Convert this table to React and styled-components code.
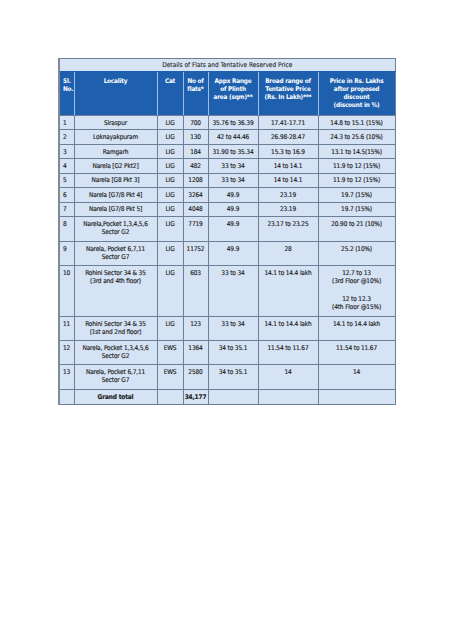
import React from "react";
import styled, { createGlobalStyle } from "styled-components";

const FONT = `"Liberation Sans Narrow", "DejaVu Sans Condensed", "DejaVu Sans", "Liberation Sans", sans-serif`;

const Global = createGlobalStyle`
  html, body { margin: 0; padding: 0; background: #ffffff; }
  body { font-family: ${FONT}; }
`;

const Page = styled.div`
  width: 474px;
  height: 632px;
  padding: 58px 0 0 58px;
  box-sizing: border-box;
  background: #fff;
`;

const Table = styled.table`
  border-collapse: collapse;
  table-layout: fixed;
  width: 336px;
  font-family: ${FONT};
  font-stretch: condensed;
  font-size: 6.5px;
  line-height: 8px;
  letter-spacing: -0.15px;
  color: #1f1f1f;
  background: #d5e3f5;
  border: 1px solid #6d7f96;
  border-left: 2px solid #7d8a9a;
`;

const TitleCell = styled.td`
  height: 12px;
  padding: 0;
  text-align: center;
  vertical-align: middle;
  background: #d7e4f4;
  color: #2a2a2a;
  font-size: 6.5px;
  letter-spacing: 0;
  -webkit-text-stroke: 0.1px #2a2a2a;
  border-bottom: 1px solid #1e5fae;
`;

const HeadRow = styled.tr`
  height: 44px;
  background: #1e5fae;
`;

const HeadCell = styled.th`
  padding: 5px 1px 0;
  vertical-align: top;
  text-align: ${(p) => p.$align || "center"};
  color: #ffffff;
  font-weight: 700;
  font-size: 6.4px;
  line-height: 8px;
  letter-spacing: -0.2px;
  white-space: nowrap;
  border-left: 1px solid #9fbde3;
  border-bottom: 1px solid #6d7f96;
  &:first-child { border-left: none; padding-left: 3px; }
`;

const Row = styled.tr`
  height: ${(p) => p.$h}px;
`;

const Cell = styled.td`
  padding: ${(p) => (p.$mid ? "0 1px" : "3px 1px 0")};
  vertical-align: ${(p) => (p.$mid ? "middle" : "top")};
  text-align: ${(p) => p.$align || "center"};
  font-weight: ${(p) => (p.$bold ? 700 : 400)};
  -webkit-text-stroke: 0.15px #1f1f1f;
  border: 1px solid #6d7f96;
  white-space: nowrap;
  &:first-child { padding-left: 3px; }
`;

const Block = styled.div`
  & + & { margin-top: 10px; }
`;

const rows = [
  { h: 14.43, n: "1", loc: ["Siraspur"], cat: "LIG", flats: "700", area: "35.76 to 36.39", broad: "17.41-17.71", price: [["14.8 to 15.1 (15%)"]] },
  { h: 14.43, n: "2", loc: ["Loknayakpuram"], cat: "LIG", flats: "130", area: "42 to 44.46", broad: "26.98-28.47", price: [["24.3 to 25.6 (10%)"]] },
  { h: 14.43, n: "3", loc: ["Ramgarh"], cat: "LIG", flats: "184", area: "31.90 to 35.34", broad: "15.3 to 16.9", price: [["13.1 to 14.5(15%)"]] },
  { h: 14.43, n: "4", loc: ["Narela [G2 Pkt2]"], cat: "LIG", flats: "482", area: "33 to 34", broad: "14 to 14.1", price: [["11.9 to 12 (15%)"]] },
  { h: 14.43, n: "5", loc: ["Narela [G8 Pkt 3]"], cat: "LIG", flats: "1208", area: "33 to 34", broad: "14 to 14.1", price: [["11.9 to 12 (15%)"]] },
  { h: 14.43, n: "6", loc: ["Narela [G7/8 Pkt 4]"], cat: "LIG", flats: "3264", area: "49.9", broad: "23.19", price: [["19.7 (15%)"]] },
  { h: 14.43, n: "7", loc: ["Narela [G7/8 Pkt 5]"], cat: "LIG", flats: "4048", area: "49.9", broad: "23.19", price: [["19.7 (15%)"]] },
  { h: 25, n: "8", loc: ["Narela,Pocket 1,3,4,5,6", "Sector G2"], cat: "LIG", flats: "7719", area: "49.9", broad: "23.17 to 23.25", price: [["20.90 to 21 (10%)"]] },
  { h: 24, n: "9", loc: ["Narela, Pocket 6,7,11", "Sector G7"], cat: "LIG", flats: "11752", area: "49.9", broad: "28", price: [["25.2 (10%)"]] },
  { h: 51, n: "10", loc: ["Rohini Sector 34 & 35", "(3rd and 4th floor)"], cat: "LIG", flats: "603", area: "33 to 34", broad: "14.1 to 14.4 lakh", price: [["12.7 to 13", "(3rd Floor @10%)"], ["12 to 12.3", "(4th Floor @15%)"]] },
  { h: 24, n: "11", loc: ["Rohini Sector 34 & 35", "(1st and 2nd floor)"], cat: "LIG", flats: "123", area: "33 to 34", broad: "14.1 to 14.4 lakh", price: [["14.1 to 14.4 lakh"]] },
  { h: 24, n: "12", loc: ["Narela, Pocket 1,3,4,5,6", "Sector G2"], cat: "EWS", flats: "1364", area: "34 to 35.1", broad: "11.54 to 11.67", price: [["11.54 to 11.67"]] },
  { h: 25, n: "13", loc: ["Narela, Pocket 6,7,11", "Sector G7"], cat: "EWS", flats: "2580", area: "34 to 35.1", broad: "14", price: [["14"]] },
];

const Lines = ({ lines }) =>
  lines.map((l, i) => (
    <React.Fragment key={i}>
      {i > 0 && <br />}
      {l}
    </React.Fragment>
  ));

export default function App() {
  return (
    <>
      <Global />
      <Page>
        <Table>
          <colgroup>
            <col style={{ width: 15 }} />
            <col style={{ width: 83 }} />
            <col style={{ width: 26 }} />
            <col style={{ width: 25 }} />
            <col style={{ width: 50 }} />
            <col style={{ width: 60 }} />
            <col style={{ width: 77 }} />
          </colgroup>
          <tbody>
            <tr>
              <TitleCell colSpan={7}>Details of Flats and Tentative Reserved Price</TitleCell>
            </tr>
            <HeadRow>
              <HeadCell $align="left">Sl.<br />No.</HeadCell>
              <HeadCell>Locality</HeadCell>
              <HeadCell>Cat</HeadCell>
              <HeadCell>No of<br />flats*</HeadCell>
              <HeadCell>Appx Range<br />of Plinth<br />area (sqm)**</HeadCell>
              <HeadCell>Broad range of<br />Tentative Price<br />(Rs. In Lakh)***</HeadCell>
              <HeadCell>Price in Rs. Lakhs<br />after proposed<br />discount<br />(discount in %)</HeadCell>
            </HeadRow>
            {rows.map((r) => {
              const mid = r.h < 15;
              return (
                <Row key={r.n} $h={r.h}>
                  <Cell $align="left" $mid={mid}>{r.n}</Cell>
                  <Cell $mid={mid}><Lines lines={r.loc} /></Cell>
                  <Cell $mid={mid}>{r.cat}</Cell>
                  <Cell $mid={mid}>{r.flats}</Cell>
                  <Cell $mid={mid}>{r.area}</Cell>
                  <Cell $mid={mid}>{r.broad}</Cell>
                  <Cell $mid={mid}>
                    {r.price.map((b, i) => (
                      <Block key={i}><Lines lines={b} /></Block>
                    ))}
                  </Cell>
                </Row>
              );
            })}
            <Row $h={15}>
              <Cell $mid />
              <Cell $mid $bold>Grand total</Cell>
              <Cell $mid />
              <Cell $mid $bold>34,177</Cell>
              <Cell $mid />
              <Cell $mid />
              <Cell $mid />
            </Row>
          </tbody>
        </Table>
      </Page>
    </>
  );
}
